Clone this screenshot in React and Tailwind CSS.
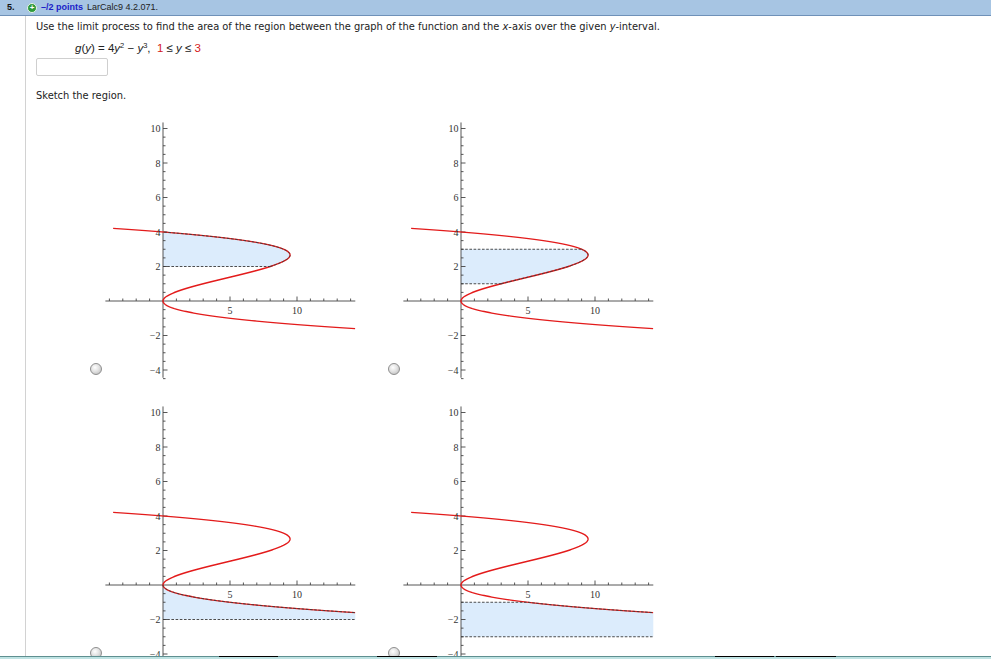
import React from 'react';

const SX = 13.4;
const SY = 17.25;
const AX = 61;
const AY = 183;

const px = (x, y) => [AX + x * SX, AY - y * SY];
const g = (y) => 4 * y * y - y * y * y;

const curve = (y0, y1, n = 80) => {
    const pts = [];
    for (let i = 0; i <= n; i++) {
        const y = y0 + ((y1 - y0) * i) / n;
        pts.push(px(g(y), y));
    }
    return pts;
};

const toPath = (pts, start = 'M') =>
    pts.map((p, i) => `${i === 0 ? start : 'L'}${p[0].toFixed(2)},${p[1].toFixed(2)}`).join(' ');

const XR = 14.35;
const YB = -1.6;

// shaded region + dashed outline for each choice
const regions = {
    a: () => {
        const c = curve(2, 4);
        const shade = `${toPath([px(0, 2)])} ${toPath(c, 'L')} Z`;
        const dashes = [toPath([px(0, 2), px(8, 2)]), toPath(c)];
        return { shade, dashes };
    },
    b: () => {
        const c = curve(1, 3);
        const shade = `${toPath([px(0, 1)])} ${toPath(c, 'L')} L${px(0, 3).join(',')} Z`;
        const dashes = [toPath([px(0, 1), px(3, 1)]), toPath([px(0, 3), px(9, 3)]), toPath(c)];
        return { shade, dashes };
    },
    c: () => {
        const c = curve(0, YB);
        const shade = `${toPath(c)} L${px(XR, YB).join(',')} L${px(XR, -2).join(',')} L${px(0, -2).join(',')} Z`;
        const dashes = [toPath([px(0, -2), px(XR, -2)]), toPath(c)];
        return { shade, dashes };
    },
    d: () => {
        const c = curve(-1, YB);
        const shade = `M${px(0, -1).join(',')} ${toPath(c, 'L')} L${px(XR, YB).join(',')} L${px(XR, -3).join(',')} L${px(0, -3).join(',')} Z`;
        const dashes = [toPath([px(0, -1), px(5, -1)]), toPath([px(0, -3), px(XR, -3)]), toPath(c)];
        return { shade, dashes };
    }
};

const Plot = ({ variant }) => {
    const { shade, dashes } = regions[variant]();
    const main = toPath(curve(YB, 4.21, 200));

    const yTicks = [];
    for (let v = -4.5; v <= 10.01; v += 0.5) {
        if (Math.abs(v) < 0.01) continue;
        const major = Math.abs(v % 2) < 0.01;
        const [, y] = px(0, v);
        yTicks.push(<line key={v} x1={AX} y1={y} x2={AX + (major ? 4.5 : 2.5)} y2={y} />);
    }
    const xTicks = [];
    for (let v = -4; v <= 14; v++) {
        if (v === 0) continue;
        const major = v % 5 === 0;
        const [x] = px(v, 0);
        xTicks.push(<line key={v} x1={x} y1={AY} x2={x} y2={AY - (major ? 4.5 : 2.5)} />);
    }

    return (
        <svg width="258" height="265" className="block shrink-0">
            <path d={shade} fill="#dcecfc" />
            <g stroke="#444" strokeWidth="0.9" fill="none">
                <line x1={px(-4.3, 0)[0]} y1={AY} x2={px(XR, 0)[0]} y2={AY} />
                <line x1={AX} y1={px(0, 10.35)[1]} x2={AX} y2={px(0, -4.45)[1]} />
                {yTicks}
                {xTicks}
            </g>
            <path d={main} stroke="#e31b1b" strokeWidth="1.4" fill="none" />
            <g stroke="#3a3a3a" strokeWidth="0.9" strokeDasharray="2.6 1.6" fill="none">
                {dashes.map((d, i) => <path key={i} d={d} />)}
            </g>
            <g fontFamily="'Liberation Serif', serif" fontSize="10" fill="#333" textAnchor="end">
                {[10, 8, 6, 4, 2, -2, -4].map((v) => (
                    <text key={v} x={AX - 2.5} y={px(0, v)[1] + 3.5}>
                        {v < 0 ? `\u2212${-v}` : v}
                    </text>
                ))}
            </g>
            <g fontFamily="'Liberation Serif', serif" fontSize="10" fill="#333" textAnchor="middle">
                <text x={px(5, 0)[0]} y={AY + 12.5}>5</text>
                <text x={px(10, 0)[0]} y={AY + 12.5}>10</text>
            </g>
        </svg>
    );
};

const Radio = () => (
    <span className="block w-[12px] h-[12px] rounded-full border border-[#8e8e8e] bg-[radial-gradient(circle_at_40%_35%,#ffffff,#e2e2e2_45%,#b4b4b4)] shrink-0 mb-[8px]" />
);

const Choice = ({ variant }) => (
    <div className="flex items-end w-[298px] pl-[6px]">
        <Radio />
        <Plot variant={variant} />
    </div>
);

export default function App() {
    return (
        <div className="relative w-[991px] h-[659px] overflow-hidden bg-white text-[#222]">
            <div className="h-[16px] bg-[#a7c5e3] border-b border-[#6f91b8] flex items-center text-[9px] font-['Liberation_Sans',Arial,sans-serif]">
                <span className="w-[27px] pl-[7px] font-bold text-[#111]">5.</span>
                <span className="flex items-center justify-center w-[10px] h-[10px] rounded-full bg-[#2f9a3c] border border-[#e8f3ea] text-white text-[8px] leading-none font-bold">+</span>
                <span className="ml-[4px] font-bold text-[#1a22c8]">–/2 points</span>
                <span className="ml-[4px] text-[#222]">LarCalc9 4.2.071.</span>
            </div>
            <div className="flex">
                <div className="w-[26px] h-[643px] border-r border-[#d2d2d2] shrink-0" />
                <div className="pl-[10px] pt-[4px]">
                    <p className="text-[9.9px] leading-[13px] font-['DejaVu_Sans',Verdana,sans-serif]">
                        Use the limit process to find the area of the region between the graph of the function and the <i>x</i>-axis over the given <i>y</i>-interval.
                    </p>
                    <p className="mt-[8px] pl-[39px] text-[11.5px] leading-[14px] font-['Liberation_Sans',Arial,sans-serif]">
                        <i>g</i>(<i>y</i>) = 4<i>y</i><sup className="text-[7.5px]">2</sup> − <i>y</i><sup className="text-[7.5px]">3</sup>,&nbsp; <span className="text-[#d42020]">1</span> ≤ <i>y</i> ≤ <span className="text-[#d42020]">3</span>
                    </p>
                    <div className="mt-[3px] w-[72px] h-[18px] border border-[#cfcfcf] rounded-[2px] bg-white" />
                    <p className="mt-[13px] text-[9.9px] leading-[13px] font-['DejaVu_Sans',Verdana,sans-serif]">Sketch the region.</p>
                    <div className="mt-[16px] ml-[48px] grid grid-cols-[298px_298px] gap-y-[19px]">
                        <Choice variant="a" />
                        <Choice variant="b" />
                        <Choice variant="c" />
                        <Choice variant="d" />
                    </div>
                </div>
            </div>
            <div className="absolute left-0 right-0 bottom-0 h-[3px] bg-[#bfe3e3] border-t border-[#5f8f90]">
                <span className="absolute left-[219px] top-[-1px] w-[59px] h-[1px] bg-black" />
                <span className="absolute left-[377px] top-[-1px] w-[60px] h-[1px] bg-black" />
                <span className="absolute left-[715px] top-[-1px] w-[59px] h-[1px] bg-black" />
                <span className="absolute left-[776px] top-[-1px] w-[60px] h-[1px] bg-black" />
            </div>
        </div>
    );
}
